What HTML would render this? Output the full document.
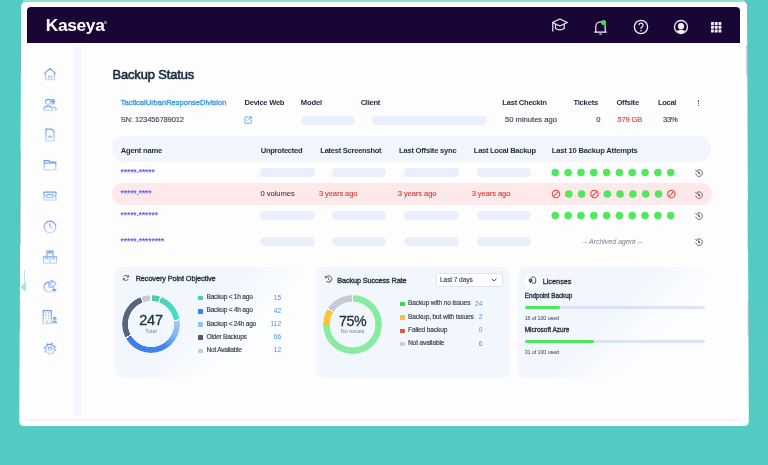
<!DOCTYPE html>
<html><head><meta charset="utf-8"><style>
html,body{margin:0;padding:0;width:768px;height:465px;overflow:hidden;background:#52cbc3;}
body{position:relative;font-family:"Liberation Sans", sans-serif;}
#w{position:absolute;left:0;top:0;width:768px;height:465px;filter:blur(0.5px);}
.t{position:absolute;white-space:nowrap;}
.b{position:absolute;}
</style></head><body>
<div id="w">
<div class="b" style="left:23px;top:0px;width:722.00px;height:2.20px;background:#8ae4d5;border-radius:0px;"></div>
<svg class="b" style="left:0;top:0" width="768" height="465" viewBox="0 0 768 465"><path d="M23.5 2 L745 2 L747 4 L748.8 421 Q748.8 426 744 426 L24 426 Q19.3 426 19.3 421 L21.2 4.5 Z" fill="#ffffff"/><path d="M20.6 5 L24 1.5 M744.5 0.5 L748 4" stroke="#8a8aa0" stroke-width="0.8" stroke-dasharray="1.2 0.8" opacity="0.7"/><path d="M20.9 42 V76 M20.4 150 V245 M19.9 300 V332" stroke="#9a9ab0" stroke-width="0.9" opacity="0.55"/><path d="M746.5 45 V76 M747.9 200 V250 M748.1 300 V336" stroke="#9a9ab0" stroke-width="0.9" opacity="0.5"/></svg>
<div class="b" style="left:27px;top:7px;width:713.00px;height:412.50px;background:#fdfdfe;border-radius:3px;"></div>
<div class="b" style="left:27px;top:419px;width:713.00px;height:2.00px;background:#f0f5fc;border-radius:0px;"></div>
<svg class="b" style="left:18px;top:270px" width="10" height="26" viewBox="0 0 10 26"><path d="M2 17 L8 12 V22 Z" fill="#a8e6dd"/><path d="M6.5 0 V13" stroke="#b5ebe3" stroke-width="1"/></svg>
<div class="b" style="left:27px;top:7px;width:713.00px;height:35.50px;background:#1a0636;border-radius:4px 4px 0 0px;"></div>
<div class="t" style="left:45.70px;top:17.47px;font-size:17.4px;line-height:17.4px;color:#ffffff;font-weight:700;letter-spacing:-0.35px;">Kaseya</div>
<div class="b" style="left:104.2px;top:21px;width:2.8px;height:2.8px;border-radius:50%;border:0.7px solid #d8d4e0;box-sizing:border-box"></div>
<div class="b" style="left:74px;top:45px;width:8.00px;height:371.00px;background:#f4f8fe;border-radius:0 9px 4px 4pxpx;"></div>
<div class="t" style="left:112.50px;top:69.48px;font-size:12.9px;line-height:12.9px;color:#1b2a3d;font-weight:400;letter-spacing:-0.12px;-webkit-text-stroke:0.6px #1b2a3d;">Backup Status</div>
<div class="t" style="left:120.70px;top:99.37px;font-size:7.6px;line-height:7.6px;color:#3a9ce8;font-weight:400;letter-spacing:-0.04px;-webkit-text-stroke:0.35px #3a9ce8;">TacticalUrbanResponseDivision</div>
<div class="t" style="left:244.50px;top:99.37px;font-size:7.6px;line-height:7.6px;color:#1f2b3a;font-weight:700;letter-spacing:-0.28px;">Device Web</div>
<div class="t" style="left:300.80px;top:99.37px;font-size:7.6px;line-height:7.6px;color:#1f2b3a;font-weight:700;letter-spacing:-0.15px;">Model</div>
<div class="t" style="left:360.70px;top:99.37px;font-size:7.6px;line-height:7.6px;color:#1f2b3a;font-weight:700;letter-spacing:-0.3px;">Client</div>
<div class="t" style="left:502.30px;top:99.37px;font-size:7.6px;line-height:7.6px;color:#1f2b3a;font-weight:700;letter-spacing:-0.25px;">Last Checkin</div>
<div class="t" style="left:573.40px;top:99.37px;font-size:7.6px;line-height:7.6px;color:#1f2b3a;font-weight:700;letter-spacing:-0.2px;">Tickets</div>
<div class="t" style="left:616.40px;top:99.37px;font-size:7.6px;line-height:7.6px;color:#1f2b3a;font-weight:700;letter-spacing:-0.22px;">Offsite</div>
<div class="t" style="left:658.00px;top:99.37px;font-size:7.6px;line-height:7.6px;color:#1f2b3a;font-weight:700;letter-spacing:-0.35px;">Local</div>
<div class="b" style="left:697.9px;top:100.2px;width:1.40px;height:1.40px;background:#2a3444;border-radius:1px;"></div>
<div class="b" style="left:697.9px;top:102.6px;width:1.40px;height:1.40px;background:#2a3444;border-radius:1px;"></div>
<div class="b" style="left:697.9px;top:105.0px;width:1.40px;height:1.40px;background:#2a3444;border-radius:1px;"></div>
<div class="t" style="left:120.70px;top:116.07px;font-size:7.6px;line-height:7.6px;color:#394352;font-weight:400;letter-spacing:-0.14px;-webkit-text-stroke:0.12px #394352;">SN: 123456789012</div>
<div class="t" style="left:505.00px;top:116.07px;font-size:7.6px;line-height:7.6px;color:#394352;font-weight:400;-webkit-text-stroke:0.15px #394352;">50 minutes ago</div>
<div class="t" style="right:167.50px;top:116.07px;font-size:7.6px;line-height:7.6px;color:#394352;font-weight:400;text-align:right;-webkit-text-stroke:0.15px #394352;">0</div>
<div class="t" style="left:617.40px;top:116.07px;font-size:7.6px;line-height:7.6px;color:#d9443c;font-weight:400;letter-spacing:-0.15px;-webkit-text-stroke:0.15px #d9443c;">579 GB</div>
<div class="t" style="left:663.00px;top:116.07px;font-size:7.6px;line-height:7.6px;color:#394352;font-weight:400;letter-spacing:-0.2px;-webkit-text-stroke:0.15px #394352;">33%</div>
<div class="b" style="left:300.8px;top:116px;width:54.70px;height:9.20px;background:#e9effb;border-radius:5px;"></div>
<div class="b" style="left:372.4px;top:116px;width:114.60px;height:9.20px;background:#e9effb;border-radius:5px;"></div>
<svg class="b" style="left:243.6px;top:116.4px" width="9" height="8" viewBox="0 0 9 8"><path d="M4.6 0.9 H1.8 Q0.9 0.9 0.9 1.8 V6.4 Q0.9 7.3 1.8 7.3 H6.4 Q7.3 7.3 7.3 6.4 V3.8" fill="none" stroke="#58abee" stroke-width="0.95"/><path d="M3.4 4.8 L7.2 1 M5 0.9 H7.3 V3.2" fill="none" stroke="#58abee" stroke-width="0.95"/></svg>
<div class="b" style="left:111.7px;top:135.9px;width:599.30px;height:26.10px;background:#f1f6fc;border-radius:13px;"></div>
<div class="t" style="left:120.70px;top:146.77px;font-size:7.6px;line-height:7.6px;color:#1f2b3a;font-weight:700;letter-spacing:-0.2px;">Agent name</div>
<div class="t" style="left:260.70px;top:146.77px;font-size:7.6px;line-height:7.6px;color:#1f2b3a;font-weight:700;letter-spacing:-0.28px;">Unprotected</div>
<div class="t" style="left:320.30px;top:146.77px;font-size:7.6px;line-height:7.6px;color:#1f2b3a;font-weight:700;letter-spacing:-0.28px;">Latest Screenshot</div>
<div class="t" style="left:399.00px;top:146.77px;font-size:7.6px;line-height:7.6px;color:#1f2b3a;font-weight:700;letter-spacing:-0.22px;">Last Offsite sync</div>
<div class="t" style="left:473.80px;top:146.77px;font-size:7.6px;line-height:7.6px;color:#1f2b3a;font-weight:700;letter-spacing:-0.3px;">Last Local Backup</div>
<div class="t" style="left:551.80px;top:146.77px;font-size:7.6px;line-height:7.6px;color:#1f2b3a;font-weight:700;letter-spacing:-0.2px;">Last 10 Backup Attempts</div>
<div class="b" style="left:112px;top:183.3px;width:600.00px;height:21.70px;background:#fde9e9;border-radius:11px;"></div>
<div class="t" style="left:120.60px;top:167.87px;font-size:8.3px;line-height:8.3px;color:#6565f2;font-weight:700;letter-spacing:-0.05px;">*****<span style="position:relative;top:-1.6px">.</span>*****</div>
<div class="t" style="left:120.60px;top:189.27px;font-size:8.3px;line-height:8.3px;color:#6565f2;font-weight:700;letter-spacing:-0.05px;">*****<span style="position:relative;top:-1.6px">.</span>****</div>
<div class="t" style="left:120.60px;top:210.87px;font-size:8.3px;line-height:8.3px;color:#6565f2;font-weight:700;letter-spacing:-0.05px;">*****<span style="position:relative;top:-1.6px">.</span>******</div>
<div class="t" style="left:120.60px;top:236.87px;font-size:8.3px;line-height:8.3px;color:#6565f2;font-weight:700;letter-spacing:-0.05px;">*****<span style="position:relative;top:-1.6px">.</span>********</div>
<div class="b" style="left:260px;top:168.0px;width:54.80px;height:9.20px;background:#e9effb;border-radius:5px;"></div>
<div class="b" style="left:332px;top:168.0px;width:54.30px;height:9.20px;background:#e9effb;border-radius:5px;"></div>
<div class="b" style="left:403.5px;top:168.0px;width:55.30px;height:9.20px;background:#e9effb;border-radius:5px;"></div>
<div class="b" style="left:476.5px;top:168.0px;width:54.90px;height:9.20px;background:#e9effb;border-radius:5px;"></div>
<div class="b" style="left:260px;top:211.0px;width:54.80px;height:9.20px;background:#e9effb;border-radius:5px;"></div>
<div class="b" style="left:332px;top:211.0px;width:54.30px;height:9.20px;background:#e9effb;border-radius:5px;"></div>
<div class="b" style="left:403.5px;top:211.0px;width:55.30px;height:9.20px;background:#e9effb;border-radius:5px;"></div>
<div class="b" style="left:476.5px;top:211.0px;width:54.90px;height:9.20px;background:#e9effb;border-radius:5px;"></div>
<div class="b" style="left:260px;top:237.0px;width:54.80px;height:9.20px;background:#e9effb;border-radius:5px;"></div>
<div class="b" style="left:332px;top:237.0px;width:54.30px;height:9.20px;background:#e9effb;border-radius:5px;"></div>
<div class="b" style="left:403.5px;top:237.0px;width:55.30px;height:9.20px;background:#e9effb;border-radius:5px;"></div>
<div class="b" style="left:476.5px;top:237.0px;width:54.90px;height:9.20px;background:#e9effb;border-radius:5px;"></div>
<div class="t" style="left:260.50px;top:189.77px;font-size:7.6px;line-height:7.6px;color:#394352;font-weight:400;letter-spacing:-0.05px;-webkit-text-stroke:0.1px #394352;">0 volumes</div>
<div class="t" style="left:318.90px;top:189.77px;font-size:7.6px;line-height:7.6px;color:#cf463e;font-weight:400;letter-spacing:-0.1px;-webkit-text-stroke:0.15px #cf463e;">3 years ago</div>
<div class="t" style="left:397.80px;top:189.77px;font-size:7.6px;line-height:7.6px;color:#cf463e;font-weight:400;letter-spacing:-0.1px;-webkit-text-stroke:0.15px #cf463e;">3 years ago</div>
<div class="t" style="left:471.70px;top:189.77px;font-size:7.6px;line-height:7.6px;color:#cf463e;font-weight:400;letter-spacing:-0.1px;-webkit-text-stroke:0.15px #cf463e;">3 years ago</div>
<svg class="b" style="left:545px;top:160px" width="140" height="70" viewBox="0 0 140 70"><circle cx="10.30" cy="12.60" r="3.8" fill="#52e85e"/><circle cx="10.30" cy="55.60" r="3.8" fill="#52e85e"/><circle cx="11.00" cy="34.00" r="3.7" fill="none" stroke="#e0524a" stroke-width="1.15"/><path d="M13.60 31.40 L8.40 36.60" stroke="#e0524a" stroke-width="1.15"/><circle cx="23.12" cy="12.60" r="3.8" fill="#52e85e"/><circle cx="23.12" cy="55.60" r="3.8" fill="#52e85e"/><circle cx="23.82" cy="34.00" r="3.8" fill="#52e85e"/><circle cx="35.94" cy="12.60" r="3.8" fill="#52e85e"/><circle cx="35.94" cy="55.60" r="3.8" fill="#52e85e"/><circle cx="36.64" cy="34.00" r="3.8" fill="#52e85e"/><circle cx="48.76" cy="12.60" r="3.8" fill="#52e85e"/><circle cx="48.76" cy="55.60" r="3.8" fill="#52e85e"/><circle cx="49.46" cy="34.00" r="3.7" fill="none" stroke="#e0524a" stroke-width="1.15"/><path d="M52.06 31.40 L46.86 36.60" stroke="#e0524a" stroke-width="1.15"/><circle cx="61.58" cy="12.60" r="3.8" fill="#52e85e"/><circle cx="61.58" cy="55.60" r="3.8" fill="#52e85e"/><circle cx="62.28" cy="34.00" r="3.8" fill="#52e85e"/><circle cx="74.40" cy="12.60" r="3.8" fill="#52e85e"/><circle cx="74.40" cy="55.60" r="3.8" fill="#52e85e"/><circle cx="75.10" cy="34.00" r="3.8" fill="#52e85e"/><circle cx="87.22" cy="12.60" r="3.8" fill="#52e85e"/><circle cx="87.22" cy="55.60" r="3.8" fill="#52e85e"/><circle cx="87.92" cy="34.00" r="3.8" fill="#52e85e"/><circle cx="100.04" cy="12.60" r="3.8" fill="#52e85e"/><circle cx="100.04" cy="55.60" r="3.8" fill="#52e85e"/><circle cx="100.74" cy="34.00" r="3.8" fill="#52e85e"/><circle cx="112.86" cy="12.60" r="3.8" fill="#52e85e"/><circle cx="112.86" cy="55.60" r="3.8" fill="#52e85e"/><circle cx="113.56" cy="34.00" r="3.8" fill="#52e85e"/><circle cx="125.68" cy="12.60" r="3.8" fill="#52e85e"/><circle cx="125.68" cy="55.60" r="3.8" fill="#52e85e"/><circle cx="126.38" cy="34.00" r="3.7" fill="none" stroke="#e0524a" stroke-width="1.15"/><path d="M128.98 31.40 L123.78 36.60" stroke="#e0524a" stroke-width="1.15"/></svg>
<div class="t" style="left:582.70px;top:237.61px;font-size:7.2px;line-height:7.2px;color:#7a8190;font-weight:400;letter-spacing:-0.1px;font-style:italic;">-- Archived agent --</div>
<svg class="b" style="left:693.50px;top:168.20px" width="10" height="10" viewBox="0 0 10 10"><path d="M2.4 3.2 A3.3 3.3 0 1 1 1.8 5.6" fill="none" stroke="#50546a" stroke-width="0.85"/><path d="M1.3 2.2 L2.4 3.5 L3.7 2.6" fill="none" stroke="#50546a" stroke-width="0.7"/><path d="M4 3.7 L5.9 6.1" fill="none" stroke="#2f3546" stroke-width="1.1"/></svg>
<svg class="b" style="left:693.50px;top:189.60px" width="10" height="10" viewBox="0 0 10 10"><path d="M2.4 3.2 A3.3 3.3 0 1 1 1.8 5.6" fill="none" stroke="#50546a" stroke-width="0.85"/><path d="M1.3 2.2 L2.4 3.5 L3.7 2.6" fill="none" stroke="#50546a" stroke-width="0.7"/><path d="M4 3.7 L5.9 6.1" fill="none" stroke="#2f3546" stroke-width="1.1"/></svg>
<svg class="b" style="left:693.50px;top:211.20px" width="10" height="10" viewBox="0 0 10 10"><path d="M2.4 3.2 A3.3 3.3 0 1 1 1.8 5.6" fill="none" stroke="#50546a" stroke-width="0.85"/><path d="M1.3 2.2 L2.4 3.5 L3.7 2.6" fill="none" stroke="#50546a" stroke-width="0.7"/><path d="M4 3.7 L5.9 6.1" fill="none" stroke="#2f3546" stroke-width="1.1"/></svg>
<svg class="b" style="left:693.50px;top:237.20px" width="10" height="10" viewBox="0 0 10 10"><path d="M2.4 3.2 A3.3 3.3 0 1 1 1.8 5.6" fill="none" stroke="#50546a" stroke-width="0.85"/><path d="M1.3 2.2 L2.4 3.5 L3.7 2.6" fill="none" stroke="#50546a" stroke-width="0.7"/><path d="M4 3.7 L5.9 6.1" fill="none" stroke="#2f3546" stroke-width="1.1"/></svg>
<div class="b" style="left:115px;top:267.2px;width:194.00px;height:111.20px;background:linear-gradient(135deg,#f2f7fd 44%,#fcfdfe 66%);border-radius:8px;"></div>
<div class="b" style="left:316px;top:267.2px;width:193.60px;height:111.20px;background:#f2f7fd;border-radius:8px;"></div>
<div class="b" style="left:518px;top:267.2px;width:190.20px;height:111.20px;background:linear-gradient(135deg,#f2f7fd 46%,#fcfdff 70%);border-radius:8px;"></div>
<div class="t" style="left:135.70px;top:275.12px;font-size:7.3px;line-height:7.3px;color:#283444;font-weight:400;letter-spacing:-0.09px;-webkit-text-stroke:0.35px #283444;">Recovery Point Objective</div>
<svg class="b" style="left:122.4px;top:273.9px" width="7.8" height="7.8" viewBox="0 0 9 9"><path d="M7.3 3.5 A3 3 0 0 0 1.8 3.2 M1.7 5.5 A3 3 0 0 0 7.2 5.8" fill="none" stroke="#3b4354" stroke-width="0.9"/><path d="M7.5 1.6 V3.6 H5.5 M1.5 7.4 V5.4 H3.5" fill="none" stroke="#3b4354" stroke-width="0.9"/></svg>
<div class="b" style="left:122px;top:295.2px;width:58px;height:58px;border-radius:50%;background:conic-gradient(from 0deg,#fff 0deg 1.5deg,#4ecab8 1.5deg 18deg,#fff 18deg 21deg,#4fd2bd 21deg,#3fe3c8 80deg,#fff 80deg 82.5deg,#a9c8f5 82.5deg,#7cb0f3 120deg,#4385ee 150deg,#3a7ced 240deg,#fff 240deg 242.5deg,#56647e 242.5deg 338deg,#fff 338deg 340.5deg,#c7cbd2 340.5deg 358.5deg,#fff 358.5deg 360deg);-webkit-mask:radial-gradient(circle,transparent 22.8px,#000 23.4px);mask:radial-gradient(circle,transparent 22.8px,#000 23.4px)"></div>
<div class="t" style="left:51.00px;width:200px;text-align:center;top:313.34px;font-size:14.6px;line-height:14.6px;color:#1f2d3d;font-weight:400;letter-spacing:-0.3px;-webkit-text-stroke:0.3px #1f2d3d;">247</div>
<div class="t" style="left:51.00px;width:200px;text-align:center;top:328.93px;font-size:5.4px;line-height:5.4px;color:#7b8494;font-weight:400;">Total</div>
<div class="b" style="left:198.4px;top:295.8px;width:4.50px;height:4.50px;background:#4ecab8;border-radius:0.5px;"></div>
<div class="t" style="left:206.50px;top:294.21px;font-size:6.6px;line-height:6.6px;color:#353c48;font-weight:400;letter-spacing:-0.24px;-webkit-text-stroke:0.15px #353c48;">Backup &lt; 1h ago</div>
<div class="t" style="right:486.90px;top:294.61px;font-size:6.6px;line-height:6.6px;color:#4a8ff0;font-weight:400;text-align:right;">15</div>
<div class="b" style="left:198.4px;top:309.0px;width:4.50px;height:4.50px;background:#3d7ff0;border-radius:0.5px;"></div>
<div class="t" style="left:206.50px;top:307.41px;font-size:6.6px;line-height:6.6px;color:#353c48;font-weight:400;letter-spacing:-0.24px;-webkit-text-stroke:0.15px #353c48;">Backup &lt; 4h ago</div>
<div class="t" style="right:486.90px;top:307.81px;font-size:6.6px;line-height:6.6px;color:#4a8ff0;font-weight:400;text-align:right;">42</div>
<div class="b" style="left:198.4px;top:322.2px;width:4.50px;height:4.50px;background:#8cc3f1;border-radius:0.5px;"></div>
<div class="t" style="left:206.50px;top:320.61px;font-size:6.6px;line-height:6.6px;color:#353c48;font-weight:400;letter-spacing:-0.24px;-webkit-text-stroke:0.15px #353c48;">Backup &lt; 24h ago</div>
<div class="t" style="right:486.90px;top:321.01px;font-size:6.6px;line-height:6.6px;color:#4a8ff0;font-weight:400;text-align:right;">112</div>
<div class="b" style="left:198.4px;top:335.40000000000003px;width:4.50px;height:4.50px;background:#4b5a74;border-radius:0.5px;"></div>
<div class="t" style="left:206.50px;top:333.81px;font-size:6.6px;line-height:6.6px;color:#353c48;font-weight:400;letter-spacing:-0.24px;-webkit-text-stroke:0.15px #353c48;">Older Backups</div>
<div class="t" style="right:486.90px;top:334.21px;font-size:6.6px;line-height:6.6px;color:#4a8ff0;font-weight:400;text-align:right;">66</div>
<div class="b" style="left:198.4px;top:348.6px;width:4.50px;height:4.50px;background:#c8ccd3;border-radius:0.5px;"></div>
<div class="t" style="left:206.50px;top:347.01px;font-size:6.6px;line-height:6.6px;color:#353c48;font-weight:400;letter-spacing:-0.24px;-webkit-text-stroke:0.15px #353c48;">Not Available</div>
<div class="t" style="right:486.90px;top:347.41px;font-size:6.6px;line-height:6.6px;color:#4a8ff0;font-weight:400;text-align:right;">12</div>
<div class="t" style="left:337.20px;top:277.32px;font-size:7.3px;line-height:7.3px;color:#283444;font-weight:400;letter-spacing:-0.11px;-webkit-text-stroke:0.35px #283444;">Backup Success Rate</div>
<svg class="b" style="left:324px;top:275px" width="9" height="9" viewBox="0 0 9 9"><path d="M1.6 2.8 A3.2 3.2 0 1 1 2.2 6.2" fill="none" stroke="#3b4354" stroke-width="0.9"/><path d="M1 1 L1.6 3 L3.5 2.5 M4.5 2.8 V4.6 L5.8 5.4" fill="none" stroke="#3b4354" stroke-width="0.8"/></svg>
<div class="b" style="left:435.8px;top:273.3px;width:66.80px;height:14.20px;background:#ffffff;border-radius:2px;border:0.8px solid #dfe4ee;box-sizing:border-box;"></div>
<div class="t" style="left:440.00px;top:276.91px;font-size:6.6px;line-height:6.6px;color:#353c48;font-weight:400;letter-spacing:-0.1px;-webkit-text-stroke:0.12px #353c48;">Last 7 days</div>
<svg class="b" style="left:491px;top:278px" width="6" height="4" viewBox="0 0 6 4"><path d="M0.6 0.6 L3 3 L5.4 0.6" fill="none" stroke="#39404c" stroke-width="0.9"/></svg>
<div class="b" style="left:323.2px;top:295.2px;width:58.6px;height:58.6px;border-radius:50%;background:conic-gradient(from 0deg,#fff 0deg 1.2deg,#88eca0 1.2deg 269.5deg,#f9c43a 269.5deg 302deg,#fff 302deg 304deg,#c6cad1 304deg 358.8deg,#fff 358.8deg 360deg);-webkit-mask:radial-gradient(circle,transparent 22.6px,#000 23.2px);mask:radial-gradient(circle,transparent 22.6px,#000 23.2px)"></div>
<div class="t" style="left:252.60px;width:200px;text-align:center;top:314.48px;font-size:14.2px;line-height:14.2px;color:#1f2d3d;font-weight:400;letter-spacing:-0.4px;-webkit-text-stroke:0.3px #1f2d3d;">75%</div>
<div class="t" style="left:252.60px;width:200px;text-align:center;top:329.03px;font-size:5.4px;line-height:5.4px;color:#7b8494;font-weight:400;">No issues</div>
<div class="b" style="left:400.1px;top:302.1px;width:4.50px;height:4.40px;background:#3fd64b;border-radius:0.5px;"></div>
<div class="t" style="left:408.00px;top:300.21px;font-size:6.6px;line-height:6.6px;color:#353c48;font-weight:400;letter-spacing:-0.14px;-webkit-text-stroke:0.15px #353c48;">Backup with no issues</div>
<div class="t" style="right:285.70px;top:300.51px;font-size:6.6px;line-height:6.6px;color:#4a8ff0;font-weight:400;text-align:right;">24</div>
<div class="b" style="left:400.1px;top:315.43px;width:4.50px;height:4.40px;background:#f8c33a;border-radius:0.5px;"></div>
<div class="t" style="left:408.00px;top:313.54px;font-size:6.6px;line-height:6.6px;color:#353c48;font-weight:400;letter-spacing:-0.14px;-webkit-text-stroke:0.15px #353c48;">Backup, but with issues</div>
<div class="t" style="right:285.70px;top:313.84px;font-size:6.6px;line-height:6.6px;color:#4a8ff0;font-weight:400;text-align:right;">2</div>
<div class="b" style="left:400.1px;top:328.76000000000005px;width:4.50px;height:4.40px;background:#e05444;border-radius:0.5px;"></div>
<div class="t" style="left:408.00px;top:326.87px;font-size:6.6px;line-height:6.6px;color:#353c48;font-weight:400;letter-spacing:-0.14px;-webkit-text-stroke:0.15px #353c48;">Failed backup</div>
<div class="t" style="right:285.70px;top:327.17px;font-size:6.6px;line-height:6.6px;color:#4a8ff0;font-weight:400;text-align:right;">0</div>
<div class="b" style="left:400.1px;top:342.09000000000003px;width:4.50px;height:4.40px;background:#c8ccd3;border-radius:0.5px;"></div>
<div class="t" style="left:408.00px;top:340.20px;font-size:6.6px;line-height:6.6px;color:#353c48;font-weight:400;letter-spacing:-0.14px;-webkit-text-stroke:0.15px #353c48;">Not available</div>
<div class="t" style="right:285.70px;top:340.50px;font-size:6.6px;line-height:6.6px;color:#4a8ff0;font-weight:400;text-align:right;">6</div>
<div class="b" style="left:524.7px;top:273.9px;width:14px;height:14px;border-radius:50%;background:#fff"></div>
<svg class="b" style="left:527.5px;top:275.5px" width="9" height="8" viewBox="0 0 9 8"><path d="M3.5 1 H6.3 L7.7 2.4 V7 H3.9" fill="none" stroke="#2f3848" stroke-width="0.9"/><path d="M2.6 7.3 L0.9 5 A1.9 1.9 0 1 1 4.3 5 Z" fill="#2f3848"/><circle cx="2.6" cy="3.9" r="0.6" fill="#fff"/></svg>
<div class="t" style="left:542.70px;top:278.32px;font-size:7.3px;line-height:7.3px;color:#243142;font-weight:400;-webkit-text-stroke:0.3px #243142;">Licenses</div>
<div class="t" style="left:524.70px;top:292.78px;font-size:6.4px;line-height:6.4px;color:#1f2b3a;font-weight:400;letter-spacing:-0.05px;-webkit-text-stroke:0.3px #1f2b3a;">Endpoint Backup</div>
<div class="b" style="left:524.7px;top:306px;width:180.60px;height:3.30px;background:#dde3f6;border-radius:2px;"></div>
<div class="b" style="left:524.7px;top:306px;width:35.50px;height:3.30px;background:#4fe55c;border-radius:2px;"></div>
<div class="t" style="left:524.70px;top:315.73px;font-size:5.4px;line-height:5.4px;color:#39404c;font-weight:400;letter-spacing:-0.1px;">16 of 100 used</div>
<div class="t" style="left:524.70px;top:326.70px;font-size:6.5px;line-height:6.5px;color:#1f2b3a;font-weight:400;-webkit-text-stroke:0.3px #1f2b3a;">Microsoft Azure</div>
<div class="b" style="left:524.7px;top:340px;width:180.60px;height:3.30px;background:#dde3f6;border-radius:2px;"></div>
<div class="b" style="left:524.7px;top:340px;width:69.10px;height:3.30px;background:#4fe55c;border-radius:2px;"></div>
<div class="t" style="left:524.70px;top:349.93px;font-size:5.4px;line-height:5.4px;color:#39404c;font-weight:400;letter-spacing:-0.1px;">31 of 100 used</div>
<svg class="b" style="left:550px;top:17px" width="20" height="17" viewBox="0 0 20 17"><path d="M2.5 5.5 L9.8 2 L17.3 5.5 L9.8 9 Z" fill="none" stroke="#f1eff5" stroke-width="1.2" stroke-linejoin="round"/><path d="M5.5 7 V11.5 Q9.8 14.2 14.2 11.5 V7" fill="none" stroke="#f1eff5" stroke-width="1.2"/><path d="M2.8 5.8 V14.5" stroke="#f1eff5" stroke-width="1.2"/></svg>
<svg class="b" style="left:592px;top:18px" width="17" height="18" viewBox="0 0 17 18"><path d="M3.8 14 V8.5 A4.7 4.7 0 0 1 13.2 8.5 V14 Z M2.2 14.2 H14.8" fill="none" stroke="#f1eff5" stroke-width="1.2" stroke-linejoin="round"/><path d="M7.3 15.5 H9.7 V16.6 H7.3Z" fill="#f1eff5"/><circle cx="11.6" cy="4.4" r="2.5" fill="#45e04f"/></svg>
<svg class="b" style="left:633px;top:19px" width="16" height="16" viewBox="0 0 16 16"><circle cx="8" cy="8" r="6.6" fill="none" stroke="#f1eff5" stroke-width="1.3"/><path d="M5.9 6.3 A2.1 2.1 0 1 1 8.6 8.3 Q8 8.6 8 9.4 V9.9" fill="none" stroke="#f1eff5" stroke-width="1.2"/><circle cx="8" cy="11.7" r="0.8" fill="#f1eff5"/></svg>
<svg class="b" style="left:673px;top:19px" width="16" height="16" viewBox="0 0 16 16"><defs><clipPath id="uc"><circle cx="8" cy="8" r="6.4"/></clipPath></defs><circle cx="8" cy="8" r="6.5" fill="none" stroke="#f1eff5" stroke-width="1.3"/><circle cx="8" cy="7.2" r="3.1" fill="#f1eff5"/><ellipse cx="8" cy="15.2" rx="5.6" ry="4.4" fill="#f1eff5" clip-path="url(#uc)"/></svg>
<svg class="b" style="left:711.3px;top:21.8px" width="11" height="11" viewBox="0 0 11 11"><rect x="0.00" y="0.00" width="2.9" height="2.9" rx="0.5" fill="#f1eff5"/><rect x="3.75" y="0.00" width="2.9" height="2.9" rx="0.5" fill="#f1eff5"/><rect x="7.50" y="0.00" width="2.9" height="2.9" rx="0.5" fill="#f1eff5"/><rect x="0.00" y="3.75" width="2.9" height="2.9" rx="0.5" fill="#f1eff5"/><rect x="3.75" y="3.75" width="2.9" height="2.9" rx="0.5" fill="#f1eff5"/><rect x="7.50" y="3.75" width="2.9" height="2.9" rx="0.5" fill="#f1eff5"/><rect x="0.00" y="7.50" width="2.9" height="2.9" rx="0.5" fill="#f1eff5"/><rect x="3.75" y="7.50" width="2.9" height="2.9" rx="0.5" fill="#f1eff5"/><rect x="7.50" y="7.50" width="2.9" height="2.9" rx="0.5" fill="#f1eff5"/></svg>
<svg class="b" style="left:42.00px;top:65.70px" width="16" height="16" viewBox="0 0 16 16"><defs><linearGradient id="g73" x1="0" y1="0" x2="0" y2="1"><stop offset="0" stop-color="#6b9bef"/><stop offset="1" stop-color="#c9dafa"/></linearGradient></defs><g fill="none" stroke="url(#g73)" stroke-width="1.25" stroke-linejoin="round"><path d="M2 8 L8 2.4 L14 8 M3.6 6.8 V13.6 H12.4 V6.8 M6.6 13.6 V10 H9.4 V13.6"/></g></svg>
<svg class="b" style="left:42.00px;top:96.50px" width="16" height="16" viewBox="0 0 16 16"><defs><linearGradient id="g104" x1="0" y1="0" x2="0" y2="1"><stop offset="0" stop-color="#6b9bef"/><stop offset="1" stop-color="#c9dafa"/></linearGradient></defs><g fill="none" stroke="url(#g104)" stroke-width="1.25" stroke-linejoin="round"><circle cx="6.2" cy="5" r="2.6"/><path d="M10 2.5 A2.5 2.5 0 0 1 10 7.5 Z" fill="#6b9bef"/><path d="M1.5 13.2 Q1.5 9.2 6.2 9.2 Q10.2 9.2 10.5 12.5 Q10.5 13.4 9.5 13.4 H2.5 Q1.5 13.4 1.5 13.2Z"/><path d="M11.5 10 Q14.2 10.5 14.5 13 H12"/></g></svg>
<svg class="b" style="left:42.00px;top:127.00px" width="16" height="16" viewBox="0 0 16 16"><defs><linearGradient id="g135" x1="0" y1="0" x2="0" y2="1"><stop offset="0" stop-color="#6b9bef"/><stop offset="1" stop-color="#c9dafa"/></linearGradient></defs><g fill="none" stroke="url(#g135)" stroke-width="1.25" stroke-linejoin="round"><path d="M4 2 H9.5 L12 4.5 V13.8 H4 Z"/><path d="M6 11 L8 9 L10 11"/></g></svg>
<svg class="b" style="left:42.00px;top:157.00px" width="16" height="16" viewBox="0 0 16 16"><defs><linearGradient id="g165" x1="0" y1="0" x2="0" y2="1"><stop offset="0" stop-color="#6b9bef"/><stop offset="1" stop-color="#c9dafa"/></linearGradient></defs><g fill="none" stroke="url(#g165)" stroke-width="1.25" stroke-linejoin="round"><path d="M2.2 3.5 H6.5 L8 5 H13.8 V12.8 H2.2 Z M2.2 6 H13.8"/></g></svg>
<svg class="b" style="left:42.00px;top:188.00px" width="16" height="16" viewBox="0 0 16 16"><defs><linearGradient id="g196" x1="0" y1="0" x2="0" y2="1"><stop offset="0" stop-color="#6b9bef"/><stop offset="1" stop-color="#c9dafa"/></linearGradient></defs><g fill="none" stroke="url(#g196)" stroke-width="1.25" stroke-linejoin="round"><path d="M2 4 H14 V7 Q12.8 7 12.8 8 Q12.8 9 14 9 V12 H2 V9 Q3.2 9 3.2 8 Q3.2 7 2 7 Z M5 6.5 H11 V9.5 H5Z"/></g></svg>
<svg class="b" style="left:42.00px;top:219.00px" width="16" height="16" viewBox="0 0 16 16"><defs><linearGradient id="g227" x1="0" y1="0" x2="0" y2="1"><stop offset="0" stop-color="#6b9bef"/><stop offset="1" stop-color="#c9dafa"/></linearGradient></defs><g fill="none" stroke="url(#g227)" stroke-width="1.25" stroke-linejoin="round"><circle cx="8" cy="8" r="5.8"/><path d="M8 4.6 V8 L10.4 9.6"/></g></svg>
<svg class="b" style="left:42.00px;top:248.50px" width="16" height="16" viewBox="0 0 16 16"><defs><linearGradient id="g256" x1="0" y1="0" x2="0" y2="1"><stop offset="0" stop-color="#6b9bef"/><stop offset="1" stop-color="#c9dafa"/></linearGradient></defs><g fill="none" stroke="url(#g256)" stroke-width="1.25" stroke-linejoin="round"><path d="M5 2 H11 V7.5 H5 Z M1.5 7.5 H8 V14 H1.5 Z M8 7.5 H14.5 V14 H8 Z M7 2 V4 H9 V2 M3.7 7.5 V9.5 H5.7 V7.5 M10.3 7.5 V9.5 H12.3 V7.5"/></g></svg>
<svg class="b" style="left:42.00px;top:278.70px" width="16" height="16" viewBox="0 0 16 16"><defs><linearGradient id="g286" x1="0" y1="0" x2="0" y2="1"><stop offset="0" stop-color="#6b9bef"/><stop offset="1" stop-color="#c9dafa"/></linearGradient></defs><g fill="none" stroke="url(#g286)" stroke-width="1.25" stroke-linejoin="round"><path d="M7 3 A5 5 0 1 0 12 8 H7 Z"/><path d="M9 1.8 A5 5 0 0 1 13.8 6.4 H9 Z"/><path d="M11 10.5 L14 10.5 L12.5 13Z" fill="#8fb3f3"/></g></svg>
<svg class="b" style="left:41.00px;top:309.30px" width="18" height="16" viewBox="0 0 16 16"><defs><linearGradient id="g317" x1="0" y1="0" x2="0" y2="1"><stop offset="0" stop-color="#6b9bef"/><stop offset="1" stop-color="#c9dafa"/></linearGradient></defs><g fill="none" stroke="url(#g317)" stroke-width="1.25" stroke-linejoin="round"><path d="M1.2 1.5 H9.4 V14.5 H1.2 Z M3.2 3.8 H4.4 M6.2 3.8 H7.4 M3.2 6.6 H4.4 M6.2 6.6 H7.4 M3.2 9.4 H4.4 M6.2 9.4 H7.4 M4.6 14.5 V12 H6 V14.5"/><circle cx="12.6" cy="9.8" r="1.5" fill="#8fb3f3"/><path d="M10.4 14.3 Q10.6 12.4 12.6 12.4 Q14.6 12.4 14.8 14.3 Z" fill="#b9cff7"/></g></svg>
<svg class="b" style="left:42.00px;top:340.80px" width="16" height="16" viewBox="0 0 16 16"><defs><linearGradient id="g348" x1="0" y1="0" x2="0" y2="1"><stop offset="0" stop-color="#6b9bef"/><stop offset="1" stop-color="#c9dafa"/></linearGradient></defs><g fill="none" stroke="url(#g348)" stroke-width="1.25" stroke-linejoin="round"><circle cx="8" cy="8" r="4.4"/><circle cx="8" cy="8" r="5.5" stroke-width="1.5" stroke-dasharray="2 2.32"/><circle cx="8" cy="8" r="1.7"/></g></svg>
</div>
</body></html>
